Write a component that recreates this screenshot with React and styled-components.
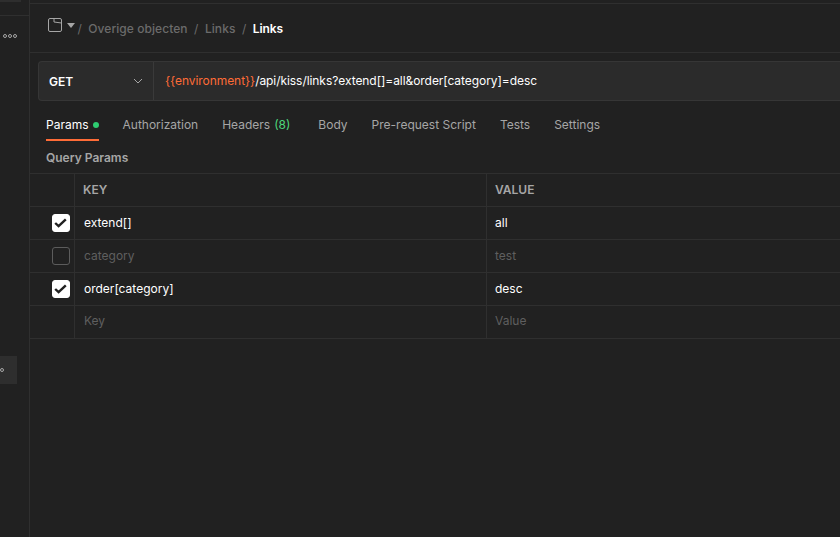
import styled, { createGlobalStyle } from "styled-components";

const GlobalStyle = createGlobalStyle`
  html, body {
    margin: 0;
    padding: 0;
    background: #212121;
    overflow: hidden;
  }
  * {
    box-sizing: border-box;
  }
`;

const Page = styled.div`
  width: 840px;
  height: 537px;
  display: flex;
  background: #212121;
  color: #fff;
  font-family: Inter, "Liberation Sans", sans-serif;
  font-size: 12px;
  overflow: hidden;
`;

const Sidebar = styled.aside`
  width: 30px;
  flex: none;
  display: flex;
  flex-direction: column;
  background: #212121;
  border-right: 1px solid #2f2f2f;
`;

const SideTop = styled.div`
  height: 16px;
  border-bottom: 1px solid #2f2f2f;
`;

const SideChip = styled.div`
  width: 21px;
  height: 2px;
  background: #2e2e2e;
`;

const SideDots = styled.div`
  height: 40px;
  padding-left: 3px;
  display: flex;
  align-items: center;
  gap: 1px;
`;

const Dot = styled.span`
  width: 4px;
  height: 4px;
  border: 1px solid #a6a6a6;
  border-radius: 50%;
`;

const SideSelected = styled.div`
  width: 17px;
  height: 28px;
  margin-top: 300px;
  background: #2e2e2e;
  display: flex;
  align-items: center;
`;

const Main = styled.main`
  flex: 1;
  min-width: 0;
  display: flex;
  flex-direction: column;
`;

const TopStrip = styled.div`
  height: 4px;
  flex: none;
  border-bottom: 1px solid #2f2f2f;
`;

const Breadcrumb = styled.nav`
  height: 49px;
  flex: none;
  padding-left: 18px;
  display: flex;
  align-items: center;
  border-bottom: 1px solid #2f2f2f;
  font-size: 12px;
  font-weight: 500;
`;

const IconSvg = styled.svg`
  margin-bottom: 6px;
`;

const Caret = styled.span`
  width: 0;
  height: 0;
  margin: 0 -4px 6px 5px;
  border-left: 4px solid transparent;
  border-right: 4px solid transparent;
  border-top: 5px solid #a6a6a6;
`;

const Crumb = styled.span`
  color: ${(p) => (p.$current ? "#fff" : "#6b6b6b")};
  font-weight: ${(p) => (p.$current ? 600 : 500)};
  letter-spacing: ${(p) => (p.$current ? "-0.1px" : "0.06px")};
`;

const Slash = styled.span`
  color: #6b6b6b;
  margin: 0 6.5px;
  font-weight: 400;
`;

const UrlBar = styled.div`
  height: 40px;
  flex: none;
  margin: 8px 0 0 8px;
  display: flex;
  background: #2b2b2b;
  border: 1px solid #363636;
  border-right: none;
  border-radius: 4px 0 0 4px;
`;

const Method = styled.div`
  width: 115px;
  flex: none;
  padding: 0 10px;
  display: flex;
  align-items: center;
  justify-content: space-between;
  border-right: 1px solid #3a3a3a;
  font-weight: 600;
  font-size: 12px;
`;

const UrlText = styled.div`
  padding: 0 0 1px 11px;
  display: flex;
  align-items: center;
  font-size: 12px;
  letter-spacing: -0.06px;
`;

const Variable = styled.span`
  color: #ff6c37;
`;

const Tabs = styled.div`
  height: 31px;
  flex: none;
  margin-top: 9px;
  padding-left: 16px;
  display: flex;
  gap: 24px;
`;

const Tab = styled.div`
  height: 31px;
  padding-top: 7px;
  display: flex;
  gap: 4px;
  color: ${(p) => (p.$active ? "#fff" : "#a6a6a6")};
  font-size: 12px;
  line-height: 16px;
  border-bottom: 2px solid ${(p) => (p.$active ? "#ff6c37" : "transparent")};
`;

const GreenDot = styled.span`
  width: 6px;
  height: 6px;
  margin-top: 5px;
  border-radius: 50%;
  background: #2ecc71;
`;

const Count = styled.span`
  color: #4dd87c;
  margin-right: 4px;
`;

const SectionLabel = styled.div`
  height: 32px;
  flex: none;
  padding: 9px 0 0 16px;
  color: #a6a6a6;
  font-size: 12px;
  line-height: 16px;
  font-weight: 600;
`;

const Table = styled.div`
  flex: none;
  border-top: 1px solid #2f2f2f;
`;

const Row = styled.div`
  height: 33px;
  display: grid;
  grid-template-columns: 45px 412px 1fr;
  border-bottom: 1px solid #2f2f2f;
`;

const CheckCell = styled.div`
  display: flex;
  align-items: center;
  justify-content: center;
  padding-left: 17px;
  border-right: 1px solid #2f2f2f;
`;

const Cell = styled.div`
  padding: 0 0 2px ${(p) => (p.$last ? "8px" : "9px")};
  display: flex;
  align-items: center;
  font-size: 12px;
  color: ${(p) => (p.$muted ? "#5f5f5f" : "#fff")};
  border-right: ${(p) => (p.$last ? "none" : "1px solid #2f2f2f")};
`;

const HeadCell = styled(Cell)`
  padding-left: 8px;
  color: #a6a6a6;
  font-weight: 600;
`;

const PlaceholderCell = styled(Cell)`
  padding-bottom: 4px;
`;

const Box = styled.span`
  width: 18px;
  height: 18px;
  display: flex;
  align-items: center;
  justify-content: center;
  border-radius: 3px;
  background: ${(p) => (p.$checked ? "#fff" : "transparent")};
  border: 1px solid ${(p) => (p.$checked ? "#fff" : "#5c5c5c")};
`;

const CollectionIcon = () => (
  <IconSvg width="14" height="14" viewBox="0 0 14 14" fill="none" stroke="#a6a6a6" strokeWidth="1">
    <rect x="0.5" y="0.5" width="13" height="13" rx="1.5" />
    <path d="M6 0.5V4L13.5 5" />
  </IconSvg>
);

const Chevron = () => (
  <svg width="10" height="6" viewBox="0 0 10 6" fill="none" stroke="#a6a6a6" strokeWidth="1">
    <path d="M1 1l4 4 4-4" />
  </svg>
);

const Tick = () => (
  <svg width="13" height="10" viewBox="0 0 13 10" fill="none" stroke="#212121" strokeWidth="2.4">
    <path d="M1.2 5L4.6 8.2L11.8 1.4" />
  </svg>
);

const rows = [
  { key: "extend[]", value: "all", checked: true },
  { key: "category", value: "test", checked: false },
  { key: "order[category]", value: "desc", checked: true },
];

const App = () => {
  return (
    <Page>
      <GlobalStyle />
      <Sidebar>
        <SideTop>
          <SideChip />
        </SideTop>
        <SideDots>
          <Dot />
          <Dot />
          <Dot />
        </SideDots>
        <SideSelected>
          <Dot />
        </SideSelected>
      </Sidebar>
      <Main>
        <TopStrip />
        <Breadcrumb>
          <CollectionIcon />
          <Caret />
          <Slash>/</Slash>
          <Crumb>Overige objecten</Crumb>
          <Slash>/</Slash>
          <Crumb>Links</Crumb>
          <Slash>/</Slash>
          <Crumb $current>Links</Crumb>
        </Breadcrumb>
        <UrlBar>
          <Method>
            GET
            <Chevron />
          </Method>
          <UrlText>
            <Variable>{"{{environment}}"}</Variable>
            /api/kiss/links?extend[]=all&amp;order[category]=desc
          </UrlText>
        </UrlBar>
        <Tabs>
          <Tab $active>
            Params
            <GreenDot />
          </Tab>
          <Tab>Authorization</Tab>
          <Tab>
            Headers
            <Count>(8)</Count>
          </Tab>
          <Tab>Body</Tab>
          <Tab>Pre-request Script</Tab>
          <Tab>Tests</Tab>
          <Tab>Settings</Tab>
        </Tabs>
        <SectionLabel>Query Params</SectionLabel>
        <Table>
          <Row>
            <CheckCell />
            <HeadCell>KEY</HeadCell>
            <HeadCell $last>VALUE</HeadCell>
          </Row>
          {rows.map((row) => (
            <Row key={row.key}>
              <CheckCell>
                <Box $checked={row.checked}>{row.checked && <Tick />}</Box>
              </CheckCell>
              <Cell $muted={!row.checked}>{row.key}</Cell>
              <Cell $muted={!row.checked} $last>
                {row.value}
              </Cell>
            </Row>
          ))}
          <Row>
            <CheckCell />
            <PlaceholderCell $muted>Key</PlaceholderCell>
            <PlaceholderCell $muted $last>
              Value
            </PlaceholderCell>
          </Row>
        </Table>
      </Main>
    </Page>
  );
};

export default App;
